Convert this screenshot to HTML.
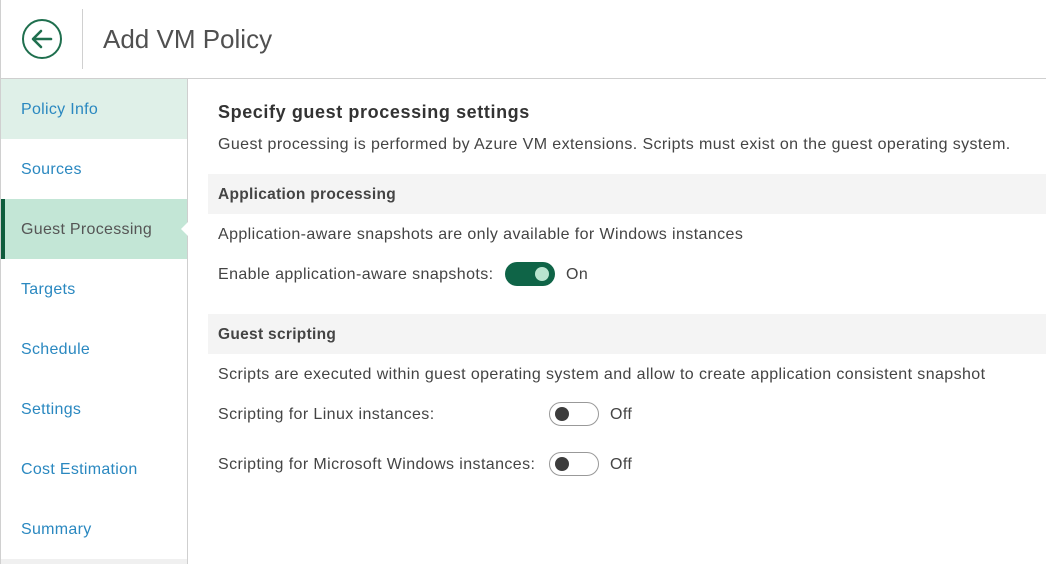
<!DOCTYPE html>
<html><head><style>
*{margin:0;padding:0;box-sizing:border-box}
body{width:1046px;height:564px;overflow:hidden;background:#fff;font-family:"Liberation Sans",sans-serif;color:#444;position:relative}
.hdr{position:absolute;left:0;top:0;width:1046px;height:79px;border-bottom:1px solid #cfcfcf;border-left:1px solid #d0d0d0}
.back{position:absolute;left:21px;top:19px;width:40px;height:40px;border:2px solid #1f6f4e;border-radius:50%}
.vsep{position:absolute;left:81px;top:9px;width:1px;height:60px;background:#d0d0d0}
.title{position:absolute;left:102px;top:24px;font-size:26px;color:#505050}
.side{position:absolute;left:0;top:79px;width:188px;height:485px;border-right:1px solid #cfcfcf;border-left:1px solid #d0d0d0}
.it{height:60px;line-height:62px;padding-left:20px;font-size:16px;color:#2a88c0;position:relative;letter-spacing:0.3px}
.it.a{background:#dff0e8}
.it.c{background:#c3e6d6;color:#555;border-left:4px solid #0f5c3d;padding-left:16px}
.it.c:after{content:"";position:absolute;right:-1px;top:23px;border:7px solid transparent;border-right-color:#fff}
.foot{position:absolute;left:1px;top:559px;width:186px;height:5px;background:#f0f0f0}
.ct{position:absolute;left:218px;font-size:16px;letter-spacing:0.4px;color:#444;white-space:nowrap}
.h{font-weight:bold;font-size:18px;color:#333;letter-spacing:0.6px}
.band{position:absolute;left:208px;width:838px;height:40px;background:#f4f4f4}
.b{font-weight:bold;color:#444;font-size:15.5px;letter-spacing:0.3px}
.tg{position:absolute;width:50px;height:24px;border-radius:12px}
.tg.on{background:#0f6447;left:505px;top:262px}
.tg.on i{position:absolute;right:6px;top:5px;width:14px;height:14px;border-radius:50%;background:#b9e4cf}
.tg.off{border:1px solid #999;background:#fff;left:549px}
.tg.off i{position:absolute;left:5px;top:4px;width:14px;height:14px;border-radius:50%;background:#3c3c3c}
</style></head><body>
<div class="hdr">
<div class="back"><svg width="36" height="36" viewBox="0 0 36 36" style="position:absolute;left:0;top:0"><path d="M27 18H10M17 10l-8 8 8 8" fill="none" stroke="#1f6f4e" stroke-width="2.6" stroke-linecap="round" stroke-linejoin="round"/></svg></div>
<div class="vsep"></div>
<div class="title">Add VM Policy</div>
</div>
<div class="side">
<div class="it a">Policy Info</div>
<div class="it">Sources</div>
<div class="it c">Guest Processing</div>
<div class="it">Targets</div>
<div class="it">Schedule</div>
<div class="it">Settings</div>
<div class="it">Cost Estimation</div>
<div class="it">Summary</div>
</div>
<div class="foot"></div>
<div class="ct h" style="top:102px">Specify guest processing settings</div>
<div class="ct" style="top:136px">Guest processing is performed by Azure VM extensions. Scripts must exist on the guest operating system.</div>
<div class="band" style="top:174px"></div>
<div class="ct b" style="top:186px">Application processing</div>
<div class="ct" style="top:226px">Application-aware snapshots are only available for Windows instances</div>
<div class="ct" style="top:266px">Enable application-aware snapshots:</div>
<div class="tg on"><i></i></div>
<div class="ct" style="top:266px;left:566px">On</div>
<div class="band" style="top:314px"></div>
<div class="ct b" style="top:326px">Guest scripting</div>
<div class="ct" style="top:366px">Scripts are executed within guest operating system and allow to create application consistent snapshot</div>
<div class="ct" style="top:406px">Scripting for Linux instances:</div>
<div class="tg off" style="top:402px"><i></i></div>
<div class="ct" style="top:406px;left:610px">Off</div>
<div class="ct" style="top:456px">Scripting for Microsoft Windows instances:</div>
<div class="tg off" style="top:452px"><i></i></div>
<div class="ct" style="top:456px;left:610px">Off</div>
</body></html>
